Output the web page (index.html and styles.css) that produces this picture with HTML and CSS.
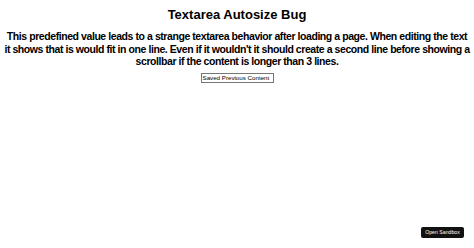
FILE: index.html
```html
<!DOCTYPE html>
<html>
<head>
<meta charset="utf-8">
<link rel="stylesheet" href="styles.css">
</head>
<body>
<main class="page">
  <h1 class="title">Textarea Autosize Bug</h1>
  <p class="lead">This predefined value leads to a strange textarea behavior after loading a page. When editing the text it shows that is would fit in one line. Even if it wouldn't it should create a second line before showing a scrollbar if the content is longer than 3 lines.</p>
  <div class="field-wrap">
    <textarea class="field" rows="1">Saved Previous Content</textarea>
  </div>
</main>
<a class="sandbox-btn">Open Sandbox</a>
</body>
</html>
```
FILE: styles.css
```css
html, body {
  margin: 0;
  padding: 0;
  background: #ffffff;
  width: 474px;
  height: 248px;
  overflow: hidden;
}
body {
  font-family: "Liberation Sans", Arial, sans-serif;
  color: #000;
  position: relative;
}
.page {
  text-align: center;
  padding: 7px 3px 0;
}
.title {
  font-size: 13px;
  font-weight: bold;
  margin: 0 0 8px;
  line-height: 15px;
}
.lead {
  font-size: 10.5px;
  font-weight: bold;
  line-height: 12.6px;
  letter-spacing: -0.43px;
  margin: 0 0 5px;
}
.field-wrap {
  display: flex;
  justify-content: center;
}
.field {
  width: 73px;
  height: 10px;
  box-sizing: border-box;
  font-family: "Liberation Sans", Arial, sans-serif;
  font-size: 6.2px;
  line-height: 8px;
  padding: 0 1px;
  border: 1px solid #767676;
  resize: none;
  overflow: hidden;
  color: #000;
  margin: 0;
}
.sandbox-btn {
  position: absolute;
  left: 421px;
  top: 227px;
  width: 43px;
  height: 11px;
  background: #111;
  color: #fff;
  border-radius: 2px;
  font-size: 5.2px;
  line-height: 11px;
  text-align: center;
  box-sizing: border-box;
}
```
